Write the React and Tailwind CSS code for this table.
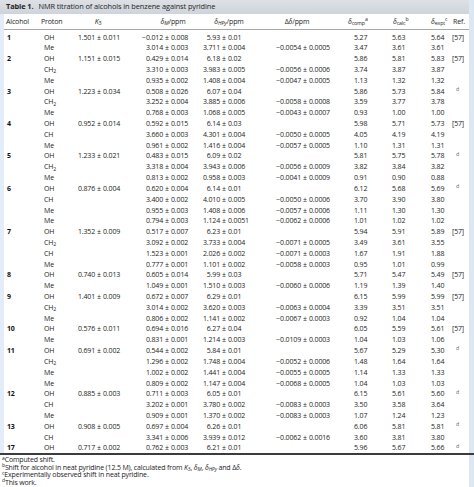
const M = "\u2212";

const groups = [
  { id: "1", k: ["1.501", "0.011"], ref: "[57]", rows: [
    ["OH", [M + "0.012", "0.008"], ["5.93", "0.01"], null, "5.27", "5.63", "5.64"],
    ["Me", ["3.014", "0.003"], ["3.711", "0.004"], [M + "0.0054", "0.0005"], "3.47", "3.61", "3.61"],
  ] },
  { id: "2", k: ["1.151", "0.015"], ref: "[57]", rows: [
    ["OH", ["0.429", "0.014"], ["6.18", "0.02"], null, "5.86", "5.81", "5.83"],
    ["CH2", ["3.310", "0.003"], ["3.983", "0.005"], [M + "0.0056", "0.0006"], "3.74", "3.87", "3.87"],
    ["Me", ["0.935", "0.002"], ["1.408", "0.004"], [M + "0.0047", "0.0005"], "1.13", "1.32", "1.32"],
  ] },
  { id: "3", k: ["1.223", "0.034"], ref: "d", rows: [
    ["OH", ["0.508", "0.026"], ["6.07", "0.04"], null, "5.86", "5.73", "5.84"],
    ["CH2", ["3.252", "0.004"], ["3.885", "0.006"], [M + "0.0058", "0.0008"], "3.59", "3.77", "3.78"],
    ["Me", ["0.768", "0.003"], ["1.068", "0.005"], [M + "0.0043", "0.0007"], "0.93", "1.00", "1.00"],
  ] },
  { id: "4", k: ["0.952", "0.014"], ref: "[57]", rows: [
    ["OH", ["0.592", "0.015"], ["6.14", "0.03"], null, "5.98", "5.71", "5.73"],
    ["CH", ["3.660", "0.003"], ["4.301", "0.004"], [M + "0.0050", "0.0005"], "4.05", "4.19", "4.19"],
    ["Me", ["0.961", "0.002"], ["1.416", "0.004"], [M + "0.0057", "0.0005"], "1.10", "1.31", "1.31"],
  ] },
  { id: "5", k: ["1.233", "0.021"], ref: "d", rows: [
    ["OH", ["0.483", "0.015"], ["6.09", "0.02"], null, "5.81", "5.75", "5.78"],
    ["CH2", ["3.318", "0.004"], ["3.943", "0.006"], [M + "0.0056", "0.0009"], "3.82", "3.84", "3.82"],
    ["Me", ["0.813", "0.002"], ["0.958", "0.003"], [M + "0.0041", "0.0009"], "0.91", "0.90", "0.88"],
  ] },
  { id: "6", k: ["0.876", "0.004"], ref: "d", rows: [
    ["OH", ["0.620", "0.004"], ["6.14", "0.01"], null, "6.12", "5.68", "5.69"],
    ["CH", ["3.400", "0.002"], ["4.010", "0.005"], [M + "0.0050", "0.0006"], "3.70", "3.90", "3.80"],
    ["Me", ["0.955", "0.003"], ["1.408", "0.006"], [M + "0.0057", "0.0006"], "1.11", "1.30", "1.30"],
    ["Me", ["0.794", "0.003"], ["1.124", "0.0051"], [M + "0.0062", "0.0006"], "1.01", "1.02", "1.02"],
  ] },
  { id: "7", k: ["1.352", "0.009"], ref: "[57]", rows: [
    ["OH", ["0.517", "0.007"], ["6.23", "0.01"], null, "5.94", "5.91", "5.89"],
    ["CH2", ["3.092", "0.002"], ["3.733", "0.004"], [M + "0.0071", "0.0005"], "3.49", "3.61", "3.55"],
    ["CH", ["1.523", "0.001"], ["2.026", "0.002"], [M + "0.0071", "0.0003"], "1.67", "1.91", "1.88"],
    ["Me", ["0.777", "0.001"], ["1.101", "0.002"], [M + "0.0058", "0.0003"], "0.95", "1.01", "0.99"],
  ] },
  { id: "8", k: ["0.740", "0.013"], ref: "[57]", rows: [
    ["OH", ["0.605", "0.014"], ["5.99", "0.03"], null, "5.71", "5.47", "5.49"],
    ["Me", ["1.049", "0.001"], ["1.510", "0.003"], [M + "0.0060", "0.0006"], "1.19", "1.39", "1.40"],
  ] },
  { id: "9", k: ["1.401", "0.009"], ref: "[57]", rows: [
    ["OH", ["0.672", "0.007"], ["6.29", "0.01"], null, "6.15", "5.99", "5.99"],
    ["CH2", ["3.014", "0.002"], ["3.620", "0.003"], [M + "0.0063", "0.0004"], "3.39", "3.51", "3.51"],
    ["Me", ["0.806", "0.002"], ["1.141", "0.002"], [M + "0.0067", "0.0003"], "0.92", "1.04", "1.04"],
  ] },
  { id: "10", k: ["0.576", "0.011"], ref: "[57]", rows: [
    ["OH", ["0.694", "0.016"], ["6.27", "0.04"], null, "6.05", "5.59", "5.61"],
    ["Me", ["0.831", "0.001"], ["1.214", "0.003"], [M + "0.0109", "0.0003"], "1.04", "1.03", "1.06"],
  ] },
  { id: "11", k: ["0.691", "0.002"], ref: "d", rows: [
    ["OH", ["0.544", "0.002"], ["5.84", "0.01"], null, "5.67", "5.29", "5.30"],
    ["CH2", ["1.296", "0.002"], ["1.748", "0.004"], [M + "0.0052", "0.0006"], "1.48", "1.64", "1.64"],
    ["Me", ["1.002", "0.002"], ["1.441", "0.004"], [M + "0.0055", "0.0005"], "1.14", "1.33", "1.33"],
    ["Me", ["0.809", "0.002"], ["1.147", "0.004"], [M + "0.0068", "0.0005"], "1.04", "1.03", "1.03"],
  ] },
  { id: "12", k: ["0.885", "0.003"], ref: "d", rows: [
    ["OH", ["0.711", "0.003"], ["6.05", "0.01"], null, "6.15", "5.61", "5.60"],
    ["CH", ["3.202", "0.001"], ["3.780", "0.002"], [M + "0.0083", "0.0003"], "3.50", "3.58", "3.64"],
    ["Me", ["0.909", "0.001"], ["1.370", "0.002"], [M + "0.0083", "0.0003"], "1.07", "1.24", "1.23"],
  ] },
  { id: "13", k: ["0.908", "0.005"], ref: "d", rows: [
    ["OH", ["0.697", "0.004"], ["6.26", "0.01"], null, "6.06", "5.81", "5.81"],
    ["CH", ["3.341", "0.006"], ["3.939", "0.012"], [M + "0.0062", "0.0016"], "3.60", "3.81", "3.80"],
  ] },
  { id: "17", k: ["0.717", "0.002"], ref: "d", rows: [
    ["OH", ["0.762", "0.003"], ["6.21", "0.01"], null, "5.96", "5.67", "5.66"],
  ] },
];

const cols = "grid grid-cols-[34px_34px_58px_66px_66px_74px_42px_40px_30px_1fr]";

const PM = ({ v, w }) =>
  v ? (
    <div className="flex whitespace-nowrap">
      <span className={`${w} shrink-0 text-right`}>{v[0]}</span>
      <span className="w-[8px] shrink-0 text-center">±</span>
      <span>{v[1]}</span>
    </div>
  ) : (
    <div />
  );

const Proton = ({ p }) =>
  p === "CH2" ? (
    <span>
      CH<sub>2</sub>
    </span>
  ) : (
    <span>{p}</span>
  );

const Header = () => (
  <div className={`${cols} h-[16px] items-center border-b border-[#a8a8a8] whitespace-nowrap`}>
    <div className="pl-[2px]">Alcohol</div>
    <div className="pl-[3px]">Proton</div>
    <div className="text-center pr-[6px]">
      <i>K</i>
      <sub>3</sub>
    </div>
    <div className="text-center pl-[20px]">
      <i>δ</i>
      <sub>
        <i>M</i>
      </sub>
      /ppm
    </div>
    <div className="text-center">
      <i>δ</i>
      <sub>
        <i>HPy</i>
      </sub>
      /ppm
    </div>
    <div className="text-center pr-[4px]">
      Δ<i>δ</i>/ppm
    </div>
    <div className="pl-[12px]">
      <i>δ</i>
      <sub>comp</sub>
      <sup>a</sup>
    </div>
    <div className="pl-[15px]">
      <i>δ</i>
      <sub>calc</sub>
      <sup>b</sup>
    </div>
    <div className="pl-[13px]">
      <i>δ</i>
      <sub>expt</sub>
      <sup>c</sup>
    </div>
    <div className="pl-[5px]">Ref.</div>
  </div>
);

export default function App() {
  return (
    <div className="w-[474px] h-[487px] overflow-hidden bg-white font-['Open_Sans',sans-serif] text-[7px] tracking-[-0.15px] leading-none text-[#232323]">
      <div className="flex h-[14px]">
        <div className="flex-1 flex items-center pl-[6px] text-[7.4px] tracking-[-0.1px] bg-gradient-to-b from-[#dde1e6] to-[#cfd4da]">
          <span className="font-bold mr-[5px]">Table 1.</span>
          <span>NMR titration of alcohols in benzene against pyridine</span>
        </div>
        <div className="w-[5px] bg-[#dce7f4]" />
      </div>

      <div className="flex">
        <div className="w-[4px] bg-[#e3ecf7]" />
        <div className="flex-1">
          <Header />
          <div className="pt-[1.6px]">
            {groups.map((g) =>
              g.rows.map((r, i) => (
                <div key={g.id + i} className={`${cols} h-[10.82px] items-center whitespace-nowrap`}>
                  <div className="pl-[3px] font-bold text-[#111]">{i === 0 ? g.id : ""}</div>
                  <div className="pl-[6px]">
                    <Proton p={r[0]} />
                  </div>
                  <PM v={i === 0 ? g.k : null} w="w-[23px]" />
                  <PM v={r[1]} w="w-[33px]" />
                  <PM v={r[2]} w="w-[24px]" />
                  <PM v={r[3]} w="w-[39px]" />
                  <div className="pl-[18px]">{r[4]}</div>
                  <div className="pl-[14px]">{r[5]}</div>
                  <div className="pl-[13px]">{r[6]}</div>
                  <div className="pl-[4px]">
                    {i === 0 ? (
                      g.ref === "d" ? (
                        <sup className="pl-[4px] text-[#666]">d</sup>
                      ) : (
                        g.ref
                      )
                    ) : (
                      ""
                    )}
                  </div>
                </div>
              ))
            )}
          </div>
        </div>
        <div className="w-[5px] bg-[#dce7f4]" />
      </div>

      <div className="h-[2px] bg-[#3c3c3c]" />

      <div className="flex">
        <div className="flex-1 pl-[2px] pt-[1px] text-[7px] leading-[7.5px]">
          <p>
            <sup className="text-[5px]">a</sup>Computed shift.
          </p>
          <p>
            <sup className="text-[5px]">b</sup>Shift for alcohol in neat pyridine (12.5 M), calculated from <i>K</i>
            <sub className="text-[5px]">3</sub>, <i>δ</i>
            <sub className="text-[5px]">
              <i>M</i>
            </sub>
            , <i>δ</i>
            <sub className="text-[5px]">
              <i>HPy</i>
            </sub>{" "}
            and Δ<i>δ</i>.
          </p>
          <p>
            <sup className="text-[5px]">c</sup>Experimentally observed shift in neat pyridine.
          </p>
          <p>
            <sup className="text-[5px]">d</sup>This work.
          </p>
        </div>
        <div className="w-[5px] h-[40px] bg-[#dce7f4]" />
      </div>
    </div>
  );
}
